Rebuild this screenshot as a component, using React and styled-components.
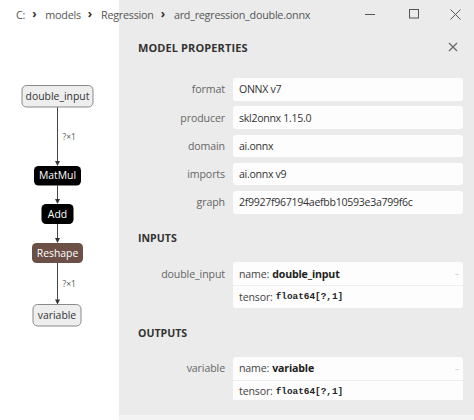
import React from "react";
import styled, { createGlobalStyle } from "styled-components";

const GlobalStyle = createGlobalStyle`
  html, body {
    margin: 0;
    padding: 0;
    background: #ffffff;
  }
  body {
    font-family: "Open Sans", "Noto Sans", sans-serif;
  }
`;

const Window = styled.div`
  position: relative;
  width: 474px;
  height: 420px;
  display: flex;
  background: #ffffff;
  overflow: hidden;
`;

const GraphPane = styled.div`
  width: 119px;
  flex: 0 0 119px;
`;

const TitleBar = styled.div`
  position: absolute;
  top: 0;
  left: 0;
  right: 0;
  height: 28px;
  display: flex;
  align-items: center;
  padding-left: 16px;
  box-sizing: border-box;
`;

const Crumbs = styled.div`
  display: flex;
  align-items: center;
  font-size: 10.8px;
  color: #555555;
  letter-spacing: -0.25px;
`;

const Chevron = styled.span`
  color: #333333;
  font-weight: 700;
  font-size: 12px;
  margin: -1px 9px 0 7px;
`;

const Controls = styled.div`
  margin-left: auto;
  display: flex;
  align-items: center;
`;

const ControlButton = styled.div`
  width: 44px;
  height: 28px;
  display: flex;
  align-items: center;
  justify-content: center;
  color: #555555;
  &:last-child {
    width: 38px;
  }
`;

const Sidebar = styled.div`
  flex: 1;
  display: flex;
  flex-direction: column;
  background: #f3f3f3;
`;

const Scroll = styled.div`
  height: 400px;
  overflow: hidden;
  background: #ebebeb;
  padding: 0 11px 0 19px;
  box-sizing: border-box;
`;

const Bottom = styled.div`
  height: 15px;
  background: #ebebeb;
`;

const PanelTitle = styled.div`
  margin-top: 37px;
  height: 20px;
  display: flex;
  align-items: center;
  justify-content: space-between;
  font-size: 11px;
  font-weight: 700;
  color: #333333;
  letter-spacing: 0.1px;
`;

const CloseButton = styled.div`
  width: 10px;
  height: 10px;
  display: flex;
  margin-right: 5px;
  color: #666666;
`;

const SectionTitle = styled.div`
  margin-top: ${(p) => p.top}px;
  height: 20px;
  display: flex;
  align-items: center;
  font-size: 10.6px;
  font-weight: 700;
  color: #333333;
`;

const PropList = styled.div`
  display: flex;
  flex-direction: column;
  gap: 5.75px;
  margin-top: ${(p) => p.top}px;
`;

const PropRow = styled.div`
  display: grid;
  grid-template-columns: 87px 1fr;
  column-gap: 8px;
  align-items: start;
`;

const Label = styled.div`
  height: ${(p) => p.h || 22.5}px;
  display: flex;
  align-items: center;
  justify-content: flex-end;
  font-size: 10.6px;
  color: #666666;
  letter-spacing: -0.1px;
`;

const Value = styled.div`
  height: 22.5px;
  display: flex;
  align-items: center;
  padding: 0 6px;
  background: #fdfdfd;
  border-radius: 3px;
  font-size: 10.6px;
  color: #333333;
  letter-spacing: -0.3px;
`;

const ArgBox = styled.div`
  background: #fdfdfd;
  border-radius: 3px;
  overflow: hidden;
`;

const ArgLine = styled.div`
  height: ${(p) => p.h}px;
  display: flex;
  align-items: center;
  padding: 0 6px;
  font-size: 10.6px;
  color: #444444;
  letter-spacing: -0.15px;
  & + & {
    border-top: 1px solid #efefef;
  }
`;

const Strong = styled.b`
  font-weight: 700;
  color: #222222;
  margin-left: 3px;
`;

const Expander = styled.span`
  margin-left: auto;
  margin-right: -2px;
  color: #cccccc;
  font-size: 9px;
`;

const Mono = styled.span`
  font-family: "Liberation Mono", "DejaVu Sans Mono", monospace;
  font-size: 9.4px;
  font-weight: 700;
  color: #222222;
  margin-left: 3px;
  letter-spacing: 0;
`;

// graph nodes, top to bottom, in pane coordinates
const nodes = [
  { name: "double_input", x: 22, y: 85.5, w: 71, h: 21.5, kind: "io" },
  { name: "MatMul", x: 34, y: 166, w: 47, h: 19.5, kind: "op" },
  { name: "Add", x: 41.5, y: 204, w: 32, h: 20, kind: "op" },
  { name: "Reshape", x: 32, y: 243, w: 51, h: 20, kind: "shape" },
  { name: "variable", x: 33, y: 304.5, w: 48, h: 21.5, kind: "io" },
];

const fills = { io: "#eeeeee", op: "#000000", shape: "#6c4f47" };

function Graph() {
  const cx = 57.5;
  const edges = [];
  for (let i = 0; i < nodes.length - 1; i++) {
    const a = nodes[i];
    const b = nodes[i + 1];
    edges.push({ y1: a.y + a.h, y2: b.y, label: i === 0 || i === 3 ? "?×1" : null });
  }
  return (
    <svg width="119" height="420" viewBox="0 0 119 420">
      {edges.map((e, i) => (
        <g key={i}>
          <line x1={cx} y1={e.y1} x2={cx} y2={e.y2 - 4} stroke="#444" strokeWidth="1" />
          <path d={`M${cx - 2.5} ${e.y2 - 5} L${cx + 2.5} ${e.y2 - 5} L${cx} ${e.y2} Z`} fill="#333" />
          {e.label && (
            <text
              x={cx + 5}
              y={(e.y1 + e.y2) / 2 + 3}
              fontSize="8.5"
              fill="#555"
              fontFamily="Open Sans, sans-serif"
            >
              {e.label}
            </text>
          )}
        </g>
      ))}
      {nodes.map((n) => (
        <g key={n.name}>
          <rect
            x={n.x}
            y={n.y}
            width={n.w}
            height={n.h}
            rx="4.5"
            fill={fills[n.kind]}
            stroke={n.kind === "io" ? "#8a8a8a" : "none"}
            strokeWidth="1"
          />
          <text
            x={n.x + n.w / 2}
            y={n.y + n.h / 2 + 3.7}
            textAnchor="middle"
            fontSize="10.4"
            fill={n.kind === "io" ? "#333" : "#fff"}
            fontFamily="Open Sans, sans-serif"
          >
            {n.name}
          </text>
        </g>
      ))}
    </svg>
  );
}

const props = [
  ["format", "ONNX v7"],
  ["producer", "skl2onnx 1.15.0"],
  ["domain", "ai.onnx"],
  ["imports", "ai.onnx v9"],
  ["graph", "2f9927f967194aefbb10593e3a799f6c"],
];

function Argument({ label, name, type }) {
  return (
    <PropRow>
      <Label h={23}>{label}</Label>
      <ArgBox>
        <ArgLine h={23}>
          name:<Strong>{name}</Strong>
          <Expander>–</Expander>
        </ArgLine>
        <ArgLine h={21.5}>
          tensor:<Mono>{type}</Mono>
        </ArgLine>
      </ArgBox>
    </PropRow>
  );
}

export default function App() {
  return (
    <>
      <GlobalStyle />
      <Window>
        <GraphPane>
          <Graph />
        </GraphPane>
        <Sidebar>
          <Scroll>
            <PanelTitle>
              MODEL PROPERTIES
              <CloseButton>
                <svg width="10" height="10" viewBox="0 0 10 10">
                  <path d="M1 1 L9 9 M9 1 L1 9" stroke="currentColor" strokeWidth="1.2" />
                </svg>
              </CloseButton>
            </PanelTitle>
            <PropList top={21}>
              {props.map(([k, v]) => (
                <PropRow key={k}>
                  <Label>{k}</Label>
                  <Value>{v}</Value>
                </PropRow>
              ))}
            </PropList>
            <SectionTitle top={14.5}>INPUTS</SectionTitle>
            <PropList top={14}>
              <Argument label="double_input" name="double_input" type="float64[?,1]" />
            </PropList>
            <SectionTitle top={15}>OUTPUTS</SectionTitle>
            <PropList top={14}>
              <Argument label="variable" name="variable" type="float64[?,1]" />
            </PropList>
          </Scroll>
          <Bottom />
        </Sidebar>
        <TitleBar>
          <Crumbs>
            C:<Chevron>›</Chevron>models<Chevron>›</Chevron>Regression<Chevron>›</Chevron>
            ard_regression_double.onnx
          </Crumbs>
          <Controls>
            <ControlButton>
              <svg width="12" height="12" viewBox="0 0 12 12">
                <path d="M1 6.5 H11" stroke="currentColor" strokeWidth="1" />
              </svg>
            </ControlButton>
            <ControlButton>
              <svg width="10" height="10" viewBox="0 0 10 10">
                <rect x="0.5" y="0.5" width="9" height="8.5" fill="none" stroke="currentColor" strokeWidth="1" />
              </svg>
            </ControlButton>
            <ControlButton>
              <svg width="11" height="11" viewBox="0 0 11 11">
                <path d="M0.5 0.5 L10.5 10.5 M10.5 0.5 L0.5 10.5" stroke="currentColor" strokeWidth="1" />
              </svg>
            </ControlButton>
          </Controls>
        </TitleBar>
      </Window>
    </>
  );
}
